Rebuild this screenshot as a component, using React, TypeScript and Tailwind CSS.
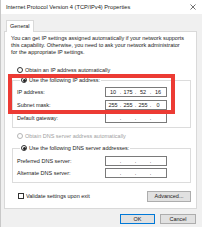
import React from 'react';

function Radio({ checked, disabled }: { checked?: boolean; disabled?: boolean }) {
  return (
    <span
      className={`flex h-[6px] w-[6px] shrink-0 items-center justify-center rounded-full border-[0.75px] bg-white ${
        disabled ? 'border-[#b5b5b5]' : 'border-[#333]'
      }`}
    >
      {checked && <span className="h-[3px] w-[3px] rounded-full bg-[#222]" />}
    </span>
  );
}

function IpBox({ value }: { value?: string[] }) {
  const parts = value ?? ['', '', '', ''];
  return (
    <div className="flex h-[10px] w-[62px] items-center border-[0.75px] border-[#7a7a7a] bg-white pl-[1px]">
      {parts.map((p, i) => (
        <React.Fragment key={i}>
          <span className="w-[12px] text-center">{p}</span>
          {i < 3 && <span className="w-[3px] text-center">.</span>}
        </React.Fragment>
      ))}
    </div>
  );
}

function Row({ label, value, mt }: { label: string; value?: string[]; mt: string }) {
  return (
    <div className={`flex h-[10px] items-center ${mt}`}>
      <span className="w-[88px]">{label}</span>
      <IpBox value={value} />
    </div>
  );
}

export default function App() {
  return (
    <div
      className="relative h-[227px] w-[202px] overflow-hidden border-l border-[#c8c8c8] bg-[#f0f0f0] text-[5.5px] text-[#1a1a1a]"
      style={{ fontFamily: '"Liberation Sans", Arial, sans-serif' }}
    >
      {/* title bar */}
      <div className="flex h-[14px] items-center justify-between bg-white pl-[5px] pr-[6px]">
        <span className="text-[5.7px]">Internet Protocol Version 4 (TCP/IPv4) Properties</span>
        <svg width="6" height="6" viewBox="0 0 6 6">
          <path d="M0.5 0.5 L5.5 5.5 M5.5 0.5 L0.5 5.5" stroke="#333" strokeWidth="0.7" />
        </svg>
      </div>

      {/* tab strip */}
      <div className="flex pl-[5px] pt-[6px]">
        <div className="relative z-10 flex h-[12px] items-center border-[0.75px] border-b-0 border-[#d9d9d9] bg-white px-[3px]">
          General
        </div>
      </div>

      {/* panel */}
      <div className="relative -mt-[1px] ml-[3px] mr-[5px] flex h-[178px] flex-col border-[0.75px] border-[#d9d9d9] bg-white">
        <div className="mt-[3px] pl-[6px] leading-[7px]">
          You can get IP settings assigned automatically if your network supports
          <br />
          this capability. Otherwise, you need to ask your network administrator
          <br />
          for the appropriate IP settings.
        </div>

        <div className="mt-[10px] flex h-[8px] items-center gap-[2px] pl-[12px]">
          <Radio />
          <span>Obtain an IP address automatically</span>
        </div>

        <fieldset className="ml-[7px] mr-[5px] mt-[2px] border-[0.75px] border-[#dcdcdc] pb-[4px] pl-[4px]">
          <legend className="ml-[3px] flex h-[8px] items-center gap-[2px] px-[1px]">
            <Radio checked />
            <span>Use the following IP address:</span>
          </legend>
          <Row label="IP address:" value={['10', '175', '52', '16']} mt="mt-[3px]" />
          <Row label="Subnet mask:" value={['255', '255', '255', '0']} mt="mt-[3px]" />
          <Row label="Default gateway:" mt="mt-[3px]" />
        </fieldset>

        <div className="mt-[4px] flex h-[8px] items-center gap-[2px] pl-[12px] text-[#a0a0a0]">
          <Radio disabled />
          <span>Obtain DNS server address automatically</span>
        </div>

        <fieldset className="ml-[7px] mr-[5px] mt-[4px] border-[0.75px] border-[#dcdcdc] pb-[4px] pl-[4px]">
          <legend className="ml-[3px] flex h-[8px] items-center gap-[2px] px-[1px]">
            <Radio checked />
            <span>Use the following DNS server addresses:</span>
          </legend>
          <Row label="Preferred DNS server:" mt="mt-[4px]" />
          <Row label="Alternate DNS server:" mt="mt-[2px]" />
        </fieldset>

        <div className="mr-[5px] mt-[8px] flex items-start justify-between pl-[13px]">
          <div className="mt-[1px] flex items-center gap-[2px]">
            <span className="h-[6px] w-[6px] border-[0.75px] border-[#333] bg-white" />
            <span>Validate settings upon exit</span>
          </div>
          <button className="flex h-[11px] w-[44px] items-center justify-center border-[0.75px] border-[#adadad] bg-[#e1e1e1]">
            Advanced...
          </button>
        </div>

        {/* red annotation */}
        <div className="pointer-events-none absolute left-[3px] top-[42px] h-[40px] w-[167px] border-[4px] border-[#ec3b34]" />
      </div>

      {/* dialog buttons */}
      <div className="mr-[6px] mt-[5px] flex justify-end gap-[5px]">
        <button className="flex h-[10px] w-[35px] items-center justify-center border-[0.75px] border-[#0078d7] bg-[#e1e1e1]">
          OK
        </button>
        <button className="flex h-[10px] w-[36px] items-center justify-center border-[0.75px] border-[#adadad] bg-[#e1e1e1]">
          Cancel
        </button>
      </div>
    </div>
  );
}
